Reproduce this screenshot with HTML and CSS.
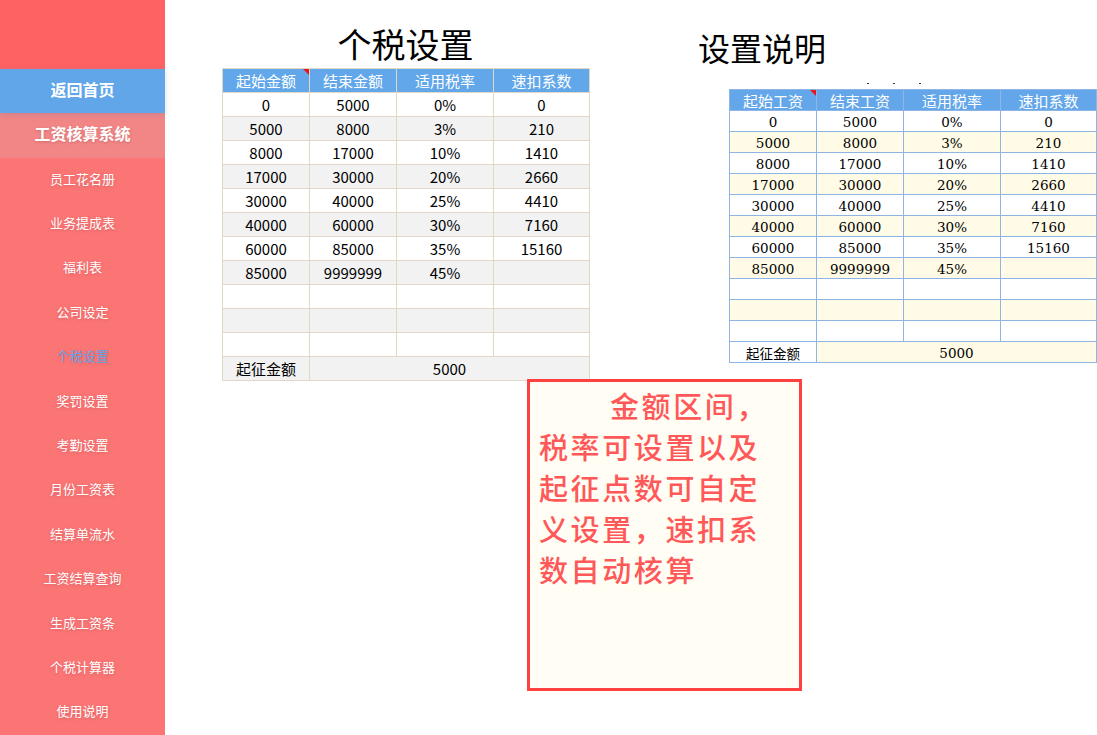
FILE: index.html
```html
<!DOCTYPE html>
<html lang="zh-CN">
<head>
<meta charset="utf-8">
<title>个税设置</title>
<link rel="stylesheet" href="styles.css">
</head>
<body>
<div class="page">
  <nav class="sidebar">
    <div class="side-top"></div>
    <div class="side-home">返回首页</div>
    <div class="side-title">工资核算系统</div>
    <div class="side-item">员工花名册</div>
    <div class="side-item">业务提成表</div>
    <div class="side-item">福利表</div>
    <div class="side-item">公司设定</div>
    <div class="side-item active">个税设置</div>
    <div class="side-item">奖罚设置</div>
    <div class="side-item">考勤设置</div>
    <div class="side-item">月份工资表</div>
    <div class="side-item">结算单流水</div>
    <div class="side-item">工资结算查询</div>
    <div class="side-item">生成工资条</div>
    <div class="side-item">个税计算器</div>
    <div class="side-item">使用说明</div>
  </nav>
  <main class="main">
    <div class="panels">
      <section class="panel-left">
        <h1 class="title-main">个税设置</h1>
        <table class="tax-table">
          <colgroup><col class="c1"><col class="c2"><col class="c3"><col class="c4"></colgroup>
          <thead>
            <tr><th class="flag">起始金额</th><th>结束金额</th><th>适用税率</th><th>速扣系数</th></tr>
          </thead>
          <tbody>
            <tr><td>0</td><td>5000</td><td>0%</td><td>0</td></tr>
            <tr><td>5000</td><td>8000</td><td>3%</td><td>210</td></tr>
            <tr><td>8000</td><td>17000</td><td>10%</td><td>1410</td></tr>
            <tr><td>17000</td><td>30000</td><td>20%</td><td>2660</td></tr>
            <tr><td>30000</td><td>40000</td><td>25%</td><td>4410</td></tr>
            <tr><td>40000</td><td>60000</td><td>30%</td><td>7160</td></tr>
            <tr><td>60000</td><td>85000</td><td>35%</td><td>15160</td></tr>
            <tr><td>85000</td><td>9999999</td><td>45%</td><td></td></tr>
            <tr><td></td><td></td><td></td><td></td></tr>
            <tr><td></td><td></td><td></td><td></td></tr>
            <tr><td></td><td></td><td></td><td></td></tr>
            <tr><td>起征金额</td><td colspan="3">5000</td></tr>
          </tbody>
        </table>
      </section>
      <section class="panel-right">
        <h2 class="title-side">设置说明</h2>
        <div class="dots"><span></span><span></span><span></span></div>
        <table class="demo-table">
          <colgroup><col class="c1"><col class="c2"><col class="c3"><col class="c4"></colgroup>
          <thead>
            <tr><th class="flag">起始工资</th><th>结束工资</th><th>适用税率</th><th>速扣系数</th></tr>
          </thead>
          <tbody>
            <tr><td>0</td><td>5000</td><td>0%</td><td>0</td></tr>
            <tr><td>5000</td><td>8000</td><td>3%</td><td>210</td></tr>
            <tr><td>8000</td><td>17000</td><td>10%</td><td>1410</td></tr>
            <tr><td>17000</td><td>30000</td><td>20%</td><td>2660</td></tr>
            <tr><td>30000</td><td>40000</td><td>25%</td><td>4410</td></tr>
            <tr><td>40000</td><td>60000</td><td>30%</td><td>7160</td></tr>
            <tr><td>60000</td><td>85000</td><td>35%</td><td>15160</td></tr>
            <tr><td>85000</td><td>9999999</td><td>45%</td><td></td></tr>
            <tr><td></td><td></td><td></td><td></td></tr>
            <tr><td></td><td></td><td></td><td></td></tr>
            <tr><td></td><td></td><td></td><td></td></tr>
            <tr class="foot"><td class="foot-label">起征金额</td><td colspan="3">5000</td></tr>
          </tbody>
        </table>
      </section>
    </div>
    <div class="note">
      <p class="note-text">金额区间，税率可设置以及起征点数可自定义设置，速扣系数自动核算</p>
    </div>
  </main>
</div>
</body>
</html>
```
FILE: styles.css
```css
* { box-sizing: border-box; }
html, body { margin: 0; padding: 0; background: #ffffff; }
body {
  font-family: "Noto Sans CJK SC", "Noto Sans", sans-serif;
  color: #000;
}
.page {
  display: flex;
  width: 1097px;
  height: 735px;
  overflow: hidden;
}

/* Sidebar */
.sidebar {
  width: 165px;
  height: 735px;
  flex: none;
  display: flex;
  flex-direction: column;
  background: #fb7575;
  color: #fff;
  text-align: center;
}
.side-top {
  height: 69px;
  flex: none;
  background: #ff6262;
}
.side-home {
  height: 44px;
  flex: none;
  background: #60a6e9;
  font-size: 16px;
  font-weight: 700;
  line-height: 40px;
  padding-bottom: 4px;
  box-shadow: 0 2px 6px rgba(90, 120, 160, 0.25);
  position: relative;
  z-index: 1;
}
.side-title {
  height: 45px;
  flex: none;
  background: #f28686;
  font-size: 16px;
  font-weight: 700;
  line-height: 41px;
  padding-bottom: 4px;
  text-shadow: 0 1px 3px rgba(150, 60, 60, 0.35);
}
.side-item {
  flex: 1;
  display: flex;
  align-items: center;
  justify-content: center;
  padding-bottom: 4px;
  font-size: 13px;
  text-shadow: 0 1px 3px rgba(170, 60, 60, 0.35);
}
.side-item.active { color: #5ea6ea; }

/* Main */
.main {
  flex: 1;
  display: flex;
  flex-direction: column;
}
.panels {
  display: flex;
  padding-left: 57px;
}
.panel-left { width: 367px; flex: none; }
.panel-right { width: 367px; margin-left: 140px; flex: none; }

.title-main {
  margin: 0;
  height: 68px;
  padding-top: 20px;
  font-size: 34px;
  line-height: 48px;
  font-weight: 400;
  text-align: center;
}
.title-side {
  margin: 0 0 0 -31px;
  height: 78px;
  padding-top: 23px;
  font-size: 32px;
  line-height: 48px;
  font-weight: 400;
}
.dots {
  height: 11px;
  display: flex;
  gap: 24px;
  padding-left: 138px;
  align-items: center;
}
.dots span {
  width: 2px;
  height: 1px;
  background: #333;
}

table {
  border-collapse: collapse;
  table-layout: fixed;
  width: 367px;
}
col.c1 { width: 87px; }
col.c2 { width: 87px; }
col.c3 { width: 97px; }
col.c4 { width: 96px; }
th, td {
  padding: 0;
  text-align: center;
  white-space: nowrap;
  overflow: hidden;
}
th.flag { position: relative; }
th.flag::after {
  content: "";
  position: absolute;
  top: 0;
  right: 0;
  border-top: 6px solid #e8141e;
  border-left: 6px solid transparent;
}

/* Left table */
.tax-table th, .tax-table td {
  height: 24px;
  border: 1px solid #e0d8c5;
  font-size: 15px;
  line-height: 22px;
}
.tax-table th {
  background: #61a7e9;
  color: #fff;
  font-weight: 400;
  border-color: #e0d8c5;
}
.tax-table tbody tr:nth-child(even) td { background: #f2f2f2; }
.tax-table tbody tr:nth-child(odd) td { background: #ffffff; }

/* Right table */
.demo-table th, .demo-table td {
  height: 21px;
  border: 1px solid #8eb5e3;
  font-family: "DejaVu Serif", "Noto Sans CJK SC", serif;
  font-size: 13.5px;
  line-height: 17px;
  padding-top: 2px;
}
.demo-table th {
  background: #63a6e9;
  color: #fff;
  font-family: "Noto Sans CJK SC", sans-serif;
  font-size: 15px;
  font-weight: 400;
  padding-top: 1px;
}
.demo-table tbody tr:nth-child(even) td { background: #fffbe6; }
.demo-table tbody tr:nth-child(odd) td { background: #ffffff; }
.demo-table tbody tr.foot td.foot-label { background: #ffffff; font-family: "Noto Sans CJK SC", sans-serif; }

/* Note box */
.note {
  margin-left: 362px;
  margin-top: -2px;
  width: 275px;
  height: 312px;
  border: 3px solid #ff4040;
  background: #fffdf4;
  padding: 3px 0 0 9px;
}
.note-text {
  margin: 0;
  width: 236px;
  font-size: 29px;
  line-height: 41px;
  letter-spacing: 2.6px;
  text-indent: 71px;
  color: #ff5858;
  font-weight: 500;
  font-family: "Noto Sans CJK SC", sans-serif;
}
```
